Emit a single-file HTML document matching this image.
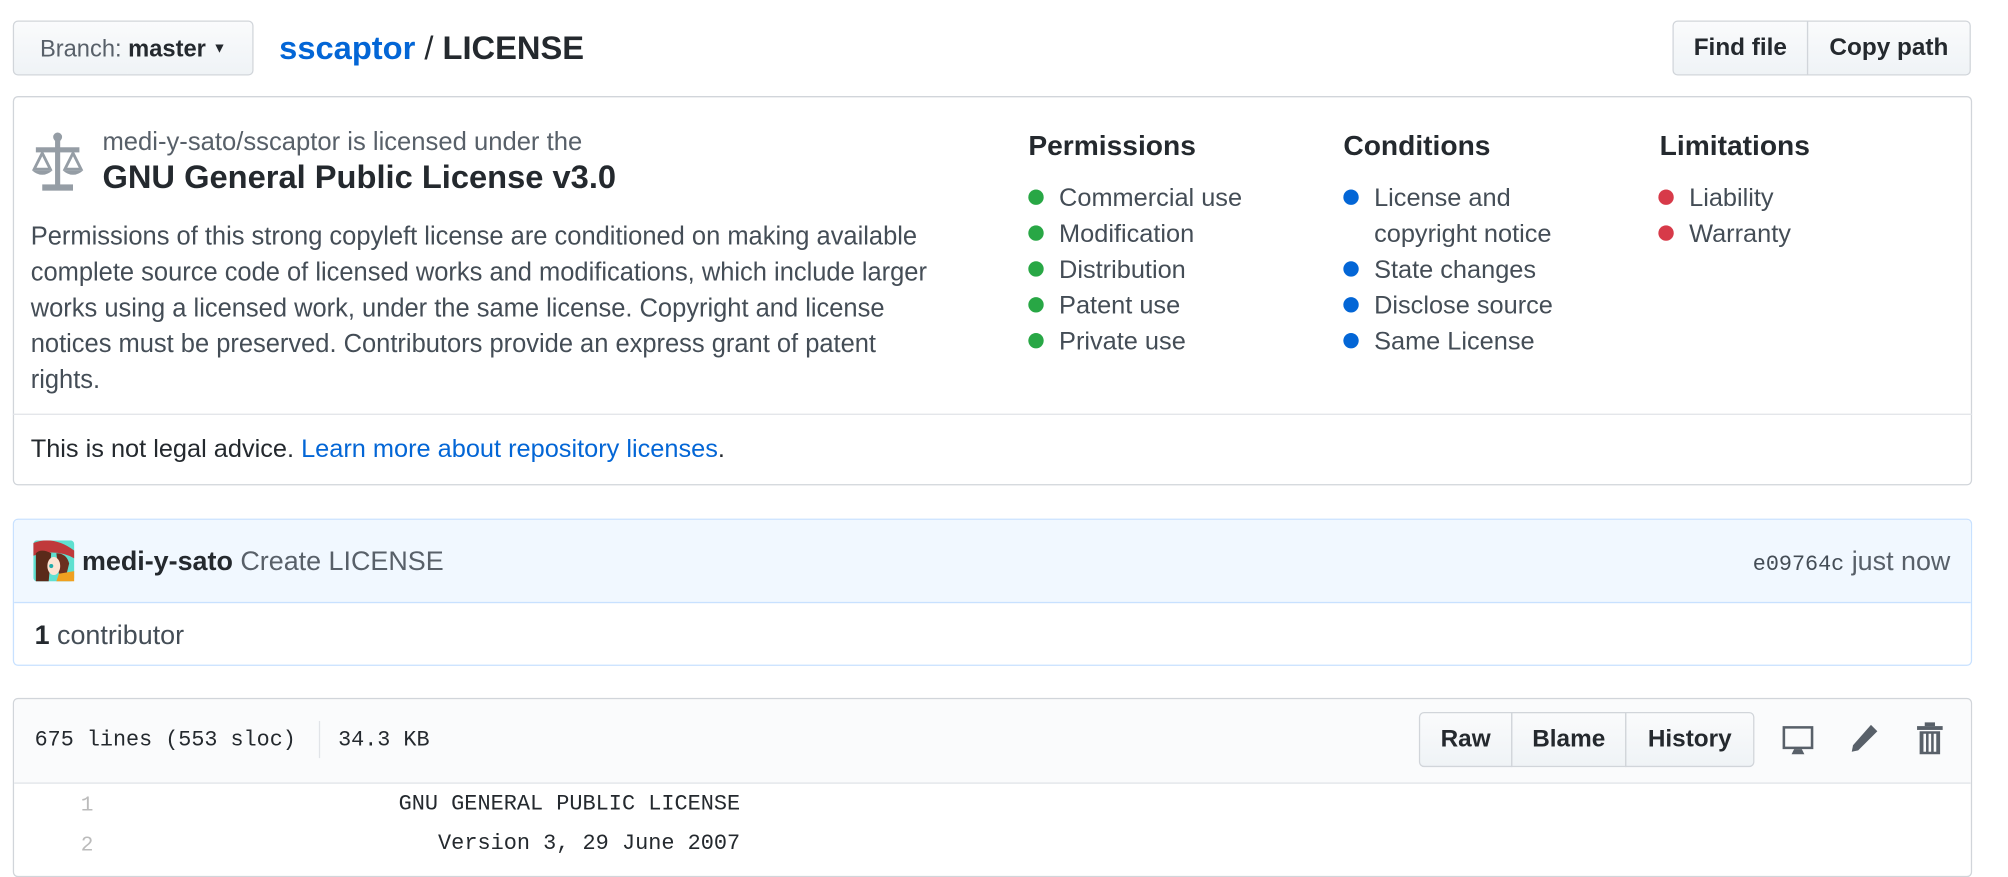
<!DOCTYPE html>
<html><head><meta charset="utf-8"><style>
*{box-sizing:border-box;margin:0;padding:0}
html,body{width:2008px;height:874px;overflow:hidden;background:#fff}
#w{position:absolute;left:0;top:0;width:1568px;height:683px;transform:scale(1.2806);transform-origin:0 0;font-family:"Liberation Sans",Arial,sans-serif;color:#24292e}
.a{position:absolute;white-space:nowrap}
.btn{position:absolute;border:1px solid #d1d5da;border-radius:4px;background:linear-gradient(#fafbfc,#eff3f6);font-weight:bold;font-size:19px;display:flex;align-items:center;justify-content:center}
.box{position:absolute;border:1px solid #d1d5da;border-radius:4px}
.mono{font-family:"Liberation Mono",monospace}
.dot{position:absolute;width:12px;height:12px;border-radius:50%}
.it{position:absolute;font-size:19.8px;line-height:22px;color:#444d56;white-space:nowrap}
.h{position:absolute;font-size:22px;font-weight:bold;white-space:nowrap}
</style></head><body><div id="w">
<div class="btn" style="left:10px;top:16px;width:188px;height:43px;font-weight:normal;color:#586069;font-size:18.5px">Branch:&nbsp;<b style="color:#24292e">master</b>&nbsp;<span style="font-size:11px;color:#24292e">▼</span></div>
<div class="a" style="left:218px;top:24px;font-size:25.5px;"><span style="color:#0366d6;font-weight:bold">sscaptor</span> / <b>LICENSE</b></div>
<div class="btn" style="left:1306px;top:16px;width:106px;height:43px;border-radius:4px 0 0 4px">Find file</div>
<div class="btn" style="left:1411px;top:16px;width:128px;height:43px;border-radius:0 4px 4px 0">Copy path</div>

<div class="box" style="left:10px;top:75px;width:1530px;height:304px"></div>
<div class="a" style="left:10px;top:323px;width:1530px;height:1px;background:#e1e4e8"></div>
<svg class="a" style="left:24px;top:103px" width="42" height="46" viewBox="0 0 42 46" fill="#959da5"><circle cx="21" cy="4" r="3.5"/><rect x="19" y="6" width="4" height="36"/><rect x="4" y="12" width="34" height="4"/><rect x="9" y="41" width="24" height="5"/><path d="M9 14 L1 30 H17 Z M9 19 L4.5 28 H13.5 Z" fill-rule="evenodd"/><path d="M1 30 Q9 37 17 30 Z"/><path d="M33 14 L25 30 H41 Z M33 19 L28.5 28 H37.5 Z" fill-rule="evenodd"/><path d="M25 30 Q33 37 41 30 Z"/></svg>
<div class="a" style="left:80px;top:100px;font-size:20px;color:#586069">medi-y-sato/sscaptor is licensed under the</div>
<div class="a" style="left:80px;top:125px;font-size:25.5px;font-weight:bold">GNU General Public License v3.0</div>
<div style="position:absolute;left:24px;top:171px;font-size:19.9px;line-height:28px;color:#444d56;white-space:normal;width:712px">Permissions of this strong copyleft license are conditioned on making available complete source code of licensed works and modifications, which include larger works using a licensed work, under the same license. Copyright and license notices must be preserved. Contributors provide an express grant of patent rights.</div>

<div class="h" style="left:803px;top:101px">Permissions</div>
<div class="h" style="left:1049px;top:101px">Conditions</div>
<div class="h" style="left:1296px;top:101px">Limitations</div>
<div class="dot" style="left:803px;top:148px;background:#28a745"></div><div class="it" style="left:827px;top:144px">Commercial use</div>
<div class="dot" style="left:803px;top:176px;background:#28a745"></div><div class="it" style="left:827px;top:172px">Modification</div>
<div class="dot" style="left:803px;top:204px;background:#28a745"></div><div class="it" style="left:827px;top:200px">Distribution</div>
<div class="dot" style="left:803px;top:232px;background:#28a745"></div><div class="it" style="left:827px;top:228px">Patent use</div>
<div class="dot" style="left:803px;top:260px;background:#28a745"></div><div class="it" style="left:827px;top:256px">Private use</div>
<div class="dot" style="left:1049px;top:148px;background:#0366d6"></div><div class="it" style="left:1073px;top:144px">License and</div>
<div class="it" style="left:1073px;top:172px">copyright notice</div>
<div class="dot" style="left:1049px;top:204px;background:#0366d6"></div><div class="it" style="left:1073px;top:200px">State changes</div>
<div class="dot" style="left:1049px;top:232px;background:#0366d6"></div><div class="it" style="left:1073px;top:228px">Disclose source</div>
<div class="dot" style="left:1049px;top:260px;background:#0366d6"></div><div class="it" style="left:1073px;top:256px">Same License</div>
<div class="dot" style="left:1295px;top:148px;background:#d73a49"></div><div class="it" style="left:1319px;top:144px">Liability</div>
<div class="dot" style="left:1295px;top:176px;background:#d73a49"></div><div class="it" style="left:1319px;top:172px">Warranty</div>
<div class="a" style="left:24px;top:340px;font-size:19.8px;color:#24292e">This is not legal advice. <span style="color:#0366d6">Learn more about repository licenses</span>.</div>

<div class="box" style="left:10px;top:405px;width:1530px;height:115px;border-color:#c8e1ff;overflow:hidden"><div style="height:65px;background:#f1f8ff;border-bottom:1px solid #c8e1ff"></div></div>
<svg class="a" style="left:26px;top:422px" width="32" height="32" viewBox="0 0 32 32"><rect width="32" height="32" rx="3" fill="#5fe0d0"/><path d="M0 2 Q16 -4 32 8 L32 14 Q18 6 0 12Z" fill="#c0393b"/><path d="M2 10 Q6 6 14 10 L12 32 L2 32Z" fill="#5a2a1a"/><path d="M18 10 Q26 10 28 18 L26 26 L20 26Z" fill="#6b2f1f"/><ellipse cx="16" cy="20" rx="5" ry="7" fill="#fde3d2"/><circle cx="14" cy="20" r="1.6" fill="#2aa"/><path d="M20 26 L32 24 L32 32 L18 32Z" fill="#f0a020"/></svg>
<div class="a" style="left:64px;top:427px;font-size:21px"><b>medi-y-sato</b> <span style="color:#586069">Create LICENSE</span></div>
<div class="a" style="right:45px;top:427px;font-size:21px;color:#586069"><span class="mono" style="font-size:17px;color:#444d56">e09764c</span> just now</div>
<div class="a" style="left:27px;top:485px;font-size:21px;color:#444d56"><b style="color:#24292e">1</b> contributor</div>

<div class="box" style="left:10px;top:545px;width:1530px;height:140px;overflow:hidden"><div style="height:66px;background:#fafbfc;border-bottom:1px solid #e1e4e8"></div></div>
<div class="a mono" style="left:27px;top:569px;font-size:17px">675 lines (553 sloc)</div>
<div class="a" style="left:249px;top:563px;width:1px;height:29px;background:#e1e4e8"></div>
<div class="a mono" style="left:264px;top:569px;font-size:17px">34.3 KB</div>
<div class="btn" style="left:1108px;top:556px;width:73px;height:43px;border-radius:4px 0 0 4px">Raw</div>
<div class="btn" style="left:1180px;top:556px;width:90px;height:43px;border-radius:0">Blame</div>
<div class="btn" style="left:1269px;top:556px;width:101px;height:43px;border-radius:0 4px 4px 0">History</div>
<svg class="a" style="left:1391px;top:566px" width="26" height="24" viewBox="0 0 26 24" fill="#586069"><path d="M1 1H25V19H1Z M3 3V17H23V3Z" fill-rule="evenodd"/><path d="M10 19H16L18 23H8Z"/></svg>
<svg class="a" style="left:1444px;top:565px" width="24" height="24" viewBox="0 0 24 24" fill="#586069"><path d="M17 1 L22 6 L7 21 L2 22 L3 17 Z"/></svg>
<svg class="a" style="left:1496px;top:564px" width="22" height="26" viewBox="0 0 22 26" fill="#586069"><rect x="7" y="0" width="8" height="3"/><rect x="1" y="3" width="20" height="3"/><path d="M3 7H19V25H3Z M6 9V23H8V9Z M10 9V23H12V9Z M14 9V23H16V9Z" fill-rule="evenodd"/></svg>
<div class="a mono" style="left:40px;top:619px;width:33px;text-align:right;font-size:16.5px;color:#bbb">1</div>
<div class="a mono" style="left:40px;top:650px;width:33px;text-align:right;font-size:16.5px;color:#bbb">2</div>
<div class="a mono" style="left:200px;width:378px;text-align:right;top:619px;font-size:17.1px">GNU GENERAL PUBLIC LICENSE</div>
<div class="a mono" style="left:200px;width:378px;text-align:right;top:650px;font-size:17.1px">Version 3, 29 June 2007</div>
</div></body></html>
